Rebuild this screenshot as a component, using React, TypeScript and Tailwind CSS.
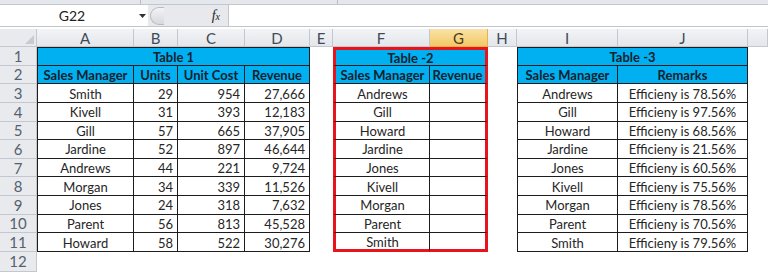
import React from 'react';

const font = { fontFamily: 'Lato, "Open Sans", sans-serif' };

type Cell = {
  text?: string;
  span?: 'two' | 'four';
  kind: 'empty' | 'title' | 'head' | 'data';
  align?: 'left' | 'center' | 'right';
  edgeL?: boolean;
  edgeT?: boolean;
  redL?: boolean;
  redR?: boolean;
  redT?: boolean;
  redB?: boolean;
};

const letters = ['A', 'B', 'C', 'D', 'E', 'F', 'G', 'H', 'I', 'J', ''];

const t1 = [
  ['Smith', '29', '954', '27,666'],
  ['Kivell', '31', '393', '12,183'],
  ['Gill', '57', '665', '37,905'],
  ['Jardine', '52', '897', '46,644'],
  ['Andrews', '44', '221', '9,724'],
  ['Morgan', '34', '339', '11,526'],
  ['Jones', '24', '318', '7,632'],
  ['Parent', '56', '813', '45,528'],
  ['Howard', '58', '522', '30,276'],
];

const t2 = ['Andrews', 'Gill', 'Howard', 'Jardine', 'Jones', 'Kivell', 'Morgan', 'Parent', 'Smith'];
const t3: [string, string][] = [
  ['Andrews', '78.56'],
  ['Gill', '97.56'],
  ['Howard', '68.56'],
  ['Jardine', '21.56'],
  ['Jones', '60.56'],
  ['Kivell', '75.56'],
  ['Morgan', '78.56'],
  ['Parent', '70.56'],
  ['Smith', '79.56'],
];

// build the 12 sheet rows as flat lists of cells (merged cells use col-span)
function buildRows(): Cell[][] {
  const rows: Cell[][] = [];
  // row 1
  rows.push([
    { kind: 'title', text: 'Table 1', span: 'four', edgeL: true, edgeT: true },
    { kind: 'empty' },
    { kind: 'title', text: 'Table -2', span: 'two', edgeL: true, edgeT: true, redL: true, redR: true, redT: true },
    { kind: 'empty' },
    { kind: 'title', text: 'Table -3', span: 'two', edgeL: true, edgeT: true },
    { kind: 'empty' },
  ]);
  // row 2
  rows.push([
    { kind: 'head', text: 'Sales Manager', edgeL: true },
    { kind: 'head', text: 'Units' },
    { kind: 'head', text: 'Unit Cost' },
    { kind: 'head', text: 'Revenue' },
    { kind: 'empty' },
    { kind: 'head', text: 'Sales Manager', edgeL: true, redL: true },
    { kind: 'head', text: 'Revenue', redR: true },
    { kind: 'empty' },
    { kind: 'head', text: 'Sales Manager', edgeL: true },
    { kind: 'head', text: 'Remarks' },
    { kind: 'empty' },
  ]);
  for (let i = 0; i < 9; i++) {
    const last = i === 8;
    rows.push([
      { kind: 'data', text: t1[i][0], align: 'center', edgeL: true },
      { kind: 'data', text: t1[i][1], align: 'right' },
      { kind: 'data', text: t1[i][2], align: 'right' },
      { kind: 'data', text: t1[i][3], align: 'right' },
      { kind: 'empty' },
      { kind: 'data', text: t2[i], align: 'center', edgeL: true, redL: true, redB: last },
      { kind: 'data', text: '', redR: true, redB: last },
      { kind: 'empty' },
      { kind: 'data', text: t3[i][0], align: 'center', edgeL: true },
      { kind: 'data', text: `Efficieny is ${t3[i][1]}%`, align: 'center' },
      { kind: 'empty' },
    ]);
  }
  // row 12
  rows.push(Array.from({ length: 11 }, () => ({ kind: 'empty' as const })));
  return rows;
}

function SheetCell({ c }: { c: Cell }) {
  if (c.kind === 'empty') return <div className="bg-white" />;
  const bg = c.kind === 'data' ? 'bg-white' : 'bg-[#00b0f0]';
  const weight = c.kind === 'data' ? 'font-normal text-[#262626]' : 'font-bold text-[#14212e]';
  const align =
    c.align === 'right' ? 'justify-end pr-[4px]' : c.align === 'left' ? 'justify-start pl-[4px]' : 'justify-center';
  return (
    <div
      className={[
        'flex items-center overflow-visible whitespace-nowrap text-[13px] leading-none',
        bg,
        weight,
        align,
        c.span === 'four' ? 'col-span-4' : c.span === 'two' ? 'col-span-2' : '',
        c.redR ? 'border-r-[3px] border-r-[#e8141b]' : 'border-r border-r-[#1c1c1c]',
        c.redB ? 'border-b-[3px] border-b-[#e8141b]' : 'border-b border-b-[#1c1c1c]',
        c.redL ? 'border-l-[3px] border-l-[#e8141b]' : c.edgeL ? 'border-l border-l-[#1c1c1c]' : '',
        c.redT ? 'border-t-[3px] border-t-[#e8141b]' : c.edgeT ? 'border-t border-t-[#1c1c1c]' : '',
      ].join(' ')}
    >
      <span className="pt-[2px]">{c.text}</span>
    </div>
  );
}

function FormulaBar() {
  return (
    <div className="flex flex-col">
      <div className="relative h-[5px] border-b border-[#c3c7cd] bg-[#e4e7eb]">
        <div className="absolute left-[140px] top-0 h-full w-px bg-[#b9bec5]" />
        <div className="absolute left-[337px] top-0 h-full w-px bg-[#b9bec5]" />
      </div>
      <div className="flex h-[22px] items-stretch border-b border-[#c3c7cd] bg-white">
        <div className="flex w-[136px] items-center justify-center text-[14px] text-[#222]">
          <span className="pl-[8px]">G22</span>
        </div>
        <div className="flex w-[12px] items-center justify-center">
          <svg width="7" height="4" viewBox="0 0 7 4">
            <path d="M0 0 L7 0 L3.5 4 Z" fill="#333" />
          </svg>
        </div>
        <div className="flex w-[80px] items-center bg-[#e7e9ec]">
          <div className="ml-[2px] h-[18px] w-[14px] rounded-l-full border border-r-0 border-[#b8bcc2] bg-gradient-to-b from-[#f2f3f5] to-[#d6d9de]" />
          <div className="flex-1" />
          <span
            className="mr-[8px] text-[14px] italic text-[#222]"
            style={{ fontFamily: '"Liberation Serif", serif' }}
          >
            f<span className="text-[10px]">x</span>
          </span>
        </div>
        <div className="flex-1 border-l border-[#c3c7cd] bg-white" />
      </div>
      <div className="h-[2px] bg-white" />
    </div>
  );
}

export default function App() {
  const rows = buildRows();
  return (
    <div className="h-[273px] w-[768px] overflow-hidden bg-white" style={font}>
      <FormulaBar />
      <div className="grid grid-cols-[37px_97px_44px_67px_65px_23px_97px_58px_29px_101px_130px_20px] grid-rows-[18px_repeat(11,18.64px)_20px]">
        {/* corner */}
        <div className="relative border-b border-r border-[#c4c8ce] bg-[#e8eaed]">
          <svg className="absolute bottom-[2px] right-[2px]" width="9" height="9" viewBox="0 0 9 9">
            <path d="M9 0 L9 9 L0 9 Z" fill="#c6cbd2" />
          </svg>
        </div>
        {letters.map((l, i) => (
          <div
            key={i}
            className={`flex items-center justify-center border-b border-r pt-[1px] text-[15px] leading-none ${
              l === 'G'
                ? 'border-[#e5b24c] bg-gradient-to-b from-[#fae3a6] to-[#f3c865] text-[#4a3b18]'
                : 'border-[#c4c8ce] bg-gradient-to-b from-[#f3f4f6] to-[#e3e6ea] text-[#3f4b59]'
            }`}
          >
            {l}
          </div>
        ))}
        {rows.map((row, r) => (
          <React.Fragment key={r}>
            <div className="flex items-center justify-center border-b border-r border-[#c4c8ce] bg-[#e8eaed] pt-[1px] text-[15px] leading-none text-[#56616e]">
              {r + 1}
            </div>
            {row.map((c, j) => (
              <SheetCell key={j} c={c} />
            ))}
          </React.Fragment>
        ))}
      </div>
    </div>
  );
}
